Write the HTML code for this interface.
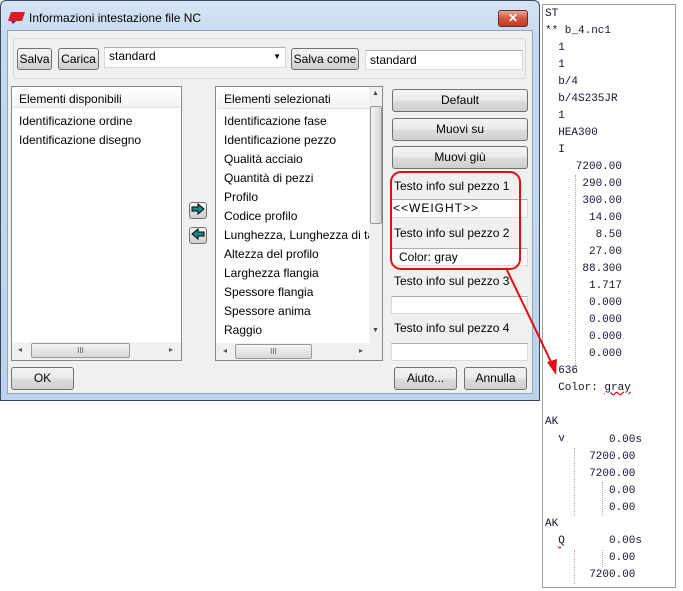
<!DOCTYPE html>
<html><head><meta charset="utf-8"><style>
*{box-sizing:border-box;margin:0;padding:0}
body{width:683px;height:591px;background:#fff;position:relative;overflow:hidden;font-family:"Liberation Sans",sans-serif;font-size:12px;color:#000}
.a{position:absolute}
.win{left:0;top:0;width:540px;height:401px;background:linear-gradient(#d6e5f5,#c4d8ee 40px,#bcd3eb);border:1px solid #3a4a5c;border-radius:6px 6px 0 0}
.client{left:7px;top:30px;width:526px;height:364px;background:#f0f0f0;border:1px solid #8ea6c0}
.btn{position:absolute;border:1px solid #707070;border-radius:3px;background:linear-gradient(#f2f2f2,#ebebeb 50%,#dddddd 51%,#cfcfcf);text-align:center;font-size:12px;line-height:20px}
.tb{position:absolute;background:#fff;border:1px solid #d5dbe3;border-top-color:#abadb3;font-size:12px;padding-left:4px;line-height:17px}
.list{position:absolute;background:#fff;border:1px solid #828790}
.it{position:absolute;left:8px;white-space:nowrap}
.lbl{position:absolute;left:394px;white-space:nowrap}
.mono{position:absolute;font-family:"Liberation Mono",monospace;font-size:11px;color:#141430;white-space:pre;line-height:17px}
.r{text-align:right}
.dot{position:absolute;border-left:1px dotted #aaa}
</style></head><body>
<div class="a win"></div>
<svg class="a" style="left:7px;top:10px" width="20" height="14"><polygon points="4,2 18,2 15,11 1,11" fill="#d42027"/><polygon points="4,11 9,11 6,14" fill="#1f3a7a"/></svg>
<div class="a" style="left:29px;top:11px;font-size:12px">Informazioni intestazione file NC</div>
<div class="a" style="left:498px;top:10px;width:30px;height:17px;border:1px solid #6b2a22;border-radius:3px;background:linear-gradient(#e8a496,#d0553f 50%,#c03a25);color:#fff;font-weight:bold;text-align:center;line-height:15px;font-size:12px">✕</div>
<div class="a client"></div>
<div class="a" style="left:13px;top:38px;width:513px;height:41px;border:1px solid #d8d8d8;border-radius:3px;background:#f0f0f0"></div>
<div class="btn" style="left:17px;top:48px;width:35px;height:22px">Salva</div>
<div class="btn" style="left:58px;top:48px;width:41px;height:22px">Carica</div>
<div class="tb" style="left:104px;top:47px;width:182px;height:21px">standard<span style="position:absolute;right:4px;top:0;font-size:8px">▼</span></div>
<div class="btn" style="left:291px;top:48px;width:68px;height:22px">Salva come</div>
<div class="tb" style="left:365px;top:50px;width:158px;height:20px;line-height:18px">standard</div>

<div class="list" style="left:11px;top:86px;width:171px;height:275px"></div>
<div class="a" style="left:13px;top:87px;width:167px;height:21px;background:linear-gradient(#fff,#f3f3f3);border-bottom:1px solid #e0e0e0"></div>
<div class="it" style="left:19px;top:92px">Elementi disponibili</div>
<div class="it" style="left:19px;top:114px">Identificazione ordine</div>
<div class="it" style="left:19px;top:133px">Identificazione disegno</div>
<div class="a" style="left:12px;top:342px;width:169px;height:18px;background:#f0f0f0"></div>
<div class="a" style="left:18px;top:345px;font-size:8px;color:#555">◂</div>
<div class="a" style="left:169px;top:345px;font-size:8px;color:#555">▸</div>
<div class="a" style="left:31px;top:343px;width:99px;height:15px;border:1px solid #999;border-radius:2px;background:linear-gradient(#f4f4f4,#d8d8d8);text-align:center;font-size:8px;line-height:13px;color:#555">III</div>

<div class="list" style="left:215px;top:86px;width:168px;height:275px;overflow:hidden">
<div class="a" style="left:1px;top:1px;width:152px;height:21px;background:linear-gradient(#fff,#f3f3f3);border-bottom:1px solid #e0e0e0"></div>
<div class="it" style="top:5px">Elementi selezionati</div>
<div class="it" style="top:27px">Identificazione fase</div>
<div class="it" style="top:46px">Identificazione pezzo</div>
<div class="it" style="top:65px">Qualità acciaio</div>
<div class="it" style="top:84px">Quantità di pezzi</div>
<div class="it" style="top:103px">Profilo</div>
<div class="it" style="top:122px">Codice profilo</div>
<div class="it" style="top:141px">Lunghezza, Lunghezza di taglio</div>
<div class="it" style="top:160px">Altezza del profilo</div>
<div class="it" style="top:179px">Larghezza flangia</div>
<div class="it" style="top:198px">Spessore flangia</div>
<div class="it" style="top:217px">Spessore anima</div>
<div class="it" style="top:236px">Raggio</div>
<div class="a" style="left:153px;top:0;width:14px;height:275px;background:#f0f0f0"></div>
<div class="a" style="left:156px;top:3px;font-size:7px;color:#444">▲</div>
<div class="a" style="left:156px;top:240px;font-size:7px;color:#444">▼</div>
<div class="a" style="left:154px;top:19px;width:12px;height:118px;border:1px solid #999;border-radius:2px;background:linear-gradient(90deg,#f4f4f4,#d8d8d8)"></div>
<div class="a" style="left:0;top:256px;width:153px;height:18px;background:#f0f0f0"></div>
<div class="a" style="left:7px;top:259px;font-size:8px;color:#555">◂</div>
<div class="a" style="left:143px;top:259px;font-size:8px;color:#555">▸</div>
<div class="a" style="left:19px;top:257px;width:77px;height:15px;border:1px solid #999;border-radius:2px;background:linear-gradient(#f4f4f4,#d8d8d8);text-align:center;font-size:8px;line-height:13px;color:#555">III</div>
</div>

<div class="btn" style="left:189px;top:202px;width:18px;height:17px;line-height:14px"><svg width="14" height="12"><polygon points="1,4 7,4 7,1 13,6 7,11 7,8 1,8" fill="#1a8a8a" stroke="#000"/></svg></div>
<div class="btn" style="left:189px;top:227px;width:18px;height:17px;line-height:14px"><svg width="14" height="12"><polygon points="13,4 7,4 7,1 1,6 7,11 7,8 13,8" fill="#1a8a8a" stroke="#000"/></svg></div>

<div class="btn" style="left:392px;top:89px;width:136px;height:23px;line-height:21px">Default</div>
<div class="btn" style="left:392px;top:118px;width:136px;height:23px;line-height:21px">Muovi su</div>
<div class="btn" style="left:392px;top:146px;width:136px;height:23px;line-height:21px">Muovi giù</div>
<div class="lbl" style="top:179px">Testo info sul pezzo 1</div>
<div class="tb" style="left:391px;top:199px;width:137px;height:19px;padding-left:1px;letter-spacing:1px">&lt;&lt;WEIGHT&gt;&gt;</div>
<div class="lbl" style="top:226px">Testo info sul pezzo 2</div>
<div class="tb" style="left:391px;top:248px;width:137px;height:18px;padding-left:7px">Color: gray</div>
<div class="lbl" style="top:274px">Testo info sul pezzo 3</div>
<div class="tb" style="left:391px;top:296px;width:137px;height:18px"></div>
<div class="lbl" style="top:321px">Testo info sul pezzo 4</div>
<div class="tb" style="left:391px;top:343px;width:137px;height:18px"></div>
<div class="a" style="left:390px;top:171px;width:131px;height:99px;border:2px solid #e01010;border-radius:11px"></div>

<div class="btn" style="left:11px;top:367px;width:63px;height:23px;line-height:21px">OK</div>
<div class="btn" style="left:394px;top:367px;width:63px;height:23px;line-height:21px">Aiuto...</div>
<div class="btn" style="left:464px;top:367px;width:63px;height:23px;line-height:21px">Annulla</div>

<div class="a" style="left:542px;top:4px;width:134px;height:584px;border:1px solid #a0a0a0;background:#fff"></div>
<div class="dot" style="left:575px;top:175px;height:190px"></div>
<div class="dot" style="left:574px;top:448px;height:68px"></div>
<div class="dot" style="left:602px;top:482px;height:34px"></div>
<div class="dot" style="left:574px;top:550px;height:34px"></div>
<div class="dot" style="left:602px;top:550px;height:17px"></div>
<div class="mono" style="left:545px;top:6px">ST
** b_4.nc1
  1
  1
  b/4
  b/4S235JR
  1
  HEA300
  I</div>
<div class="mono r" style="left:560px;width:62px;top:159px">7200.00
290.00
300.00
14.00
8.50
27.00
88.300
1.717
0.000
0.000
0.000
0.000</div>
<div class="mono" style="left:545px;top:363px">  636
  Color: <span style="text-decoration:underline wavy #d00">gray</span>

AK
  v
</div>
<div class="mono r" style="left:560px;width:82px;top:432px">0.00s
7200.00 
7200.00 
0.00 
0.00 </div>
<div class="mono" style="left:545px;top:516px">AK
  <span style="text-decoration:underline wavy #d00">Q</span></div>
<div class="mono r" style="left:560px;width:82px;top:533px">0.00s
0.00 
7200.00 </div>

<svg class="a" style="left:0;top:0" width="683" height="591"><line x1="506" y1="268" x2="553" y2="366" stroke="#e01010" stroke-width="2"/><polygon points="556,375 547,362 557,359" fill="#e01010"/></svg>
</body></html>
